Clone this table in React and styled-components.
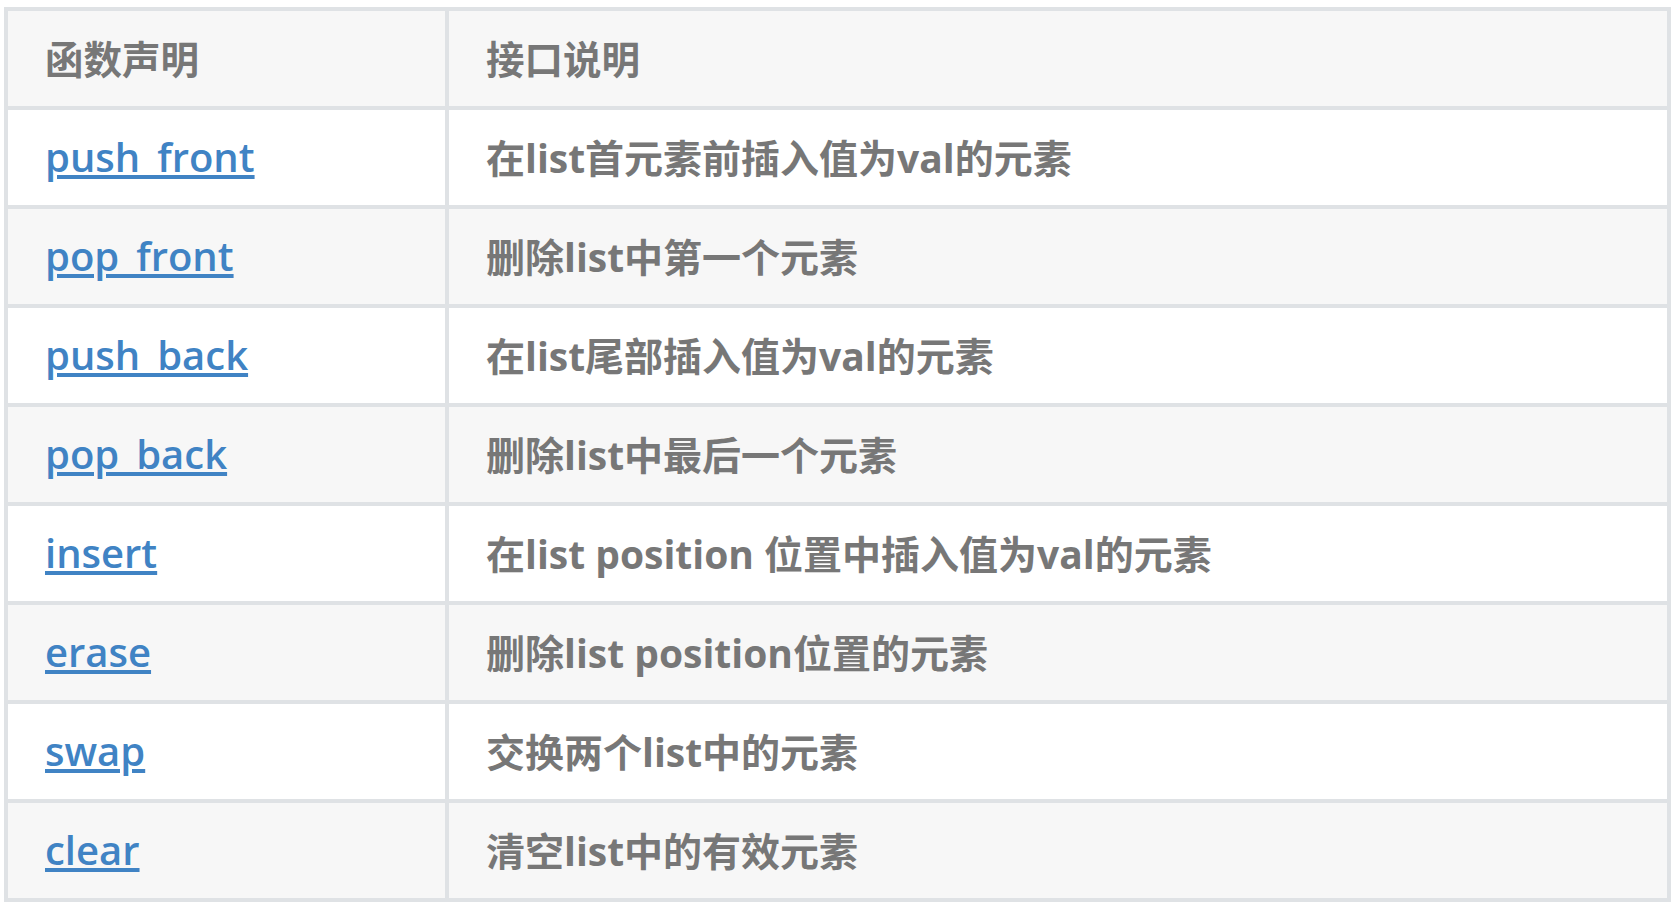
import styled, { createGlobalStyle } from "styled-components";

const GlobalStyle = createGlobalStyle`
html, body {
  margin: 0;
  padding: 0;
  background: #ffffff;
}
`;

const Page = styled.div`
padding: 7px 3px 0 4px;
font-family: "Open Sans", "Noto Sans CJK SC", sans-serif;
`;

const Table = styled.table`
width: 1667px;
border-collapse: separate;
border-spacing: 0;
border-top: 4px solid #dfe2e5;
border-left: 4px solid #dfe2e5;
table-layout: fixed;
`;

const Row = styled.tr`
background-color: ${(p) => (p.$shade ? "#f7f7f7" : "#ffffff")};
`;

const Cell = styled.td`
height: 99px;
padding: 0 0 3px 37px;
box-sizing: border-box;
border-right: 4px solid #dfe2e5;
border-bottom: 4px solid #dfe2e5;
font-size: 39px;
font-weight: 700;
color: #777777;
text-align: left;
vertical-align: middle;
white-space: nowrap;
width: ${(p) => p.$width || "auto"};
`;

const HeadCell = styled(Cell).attrs({ as: "th" })`
font-size: 38.5px;
`;

const Link = styled.a`
color: #4083c4;
font-weight: 600;
font-size: 40px;
text-decoration: underline;
text-decoration-thickness: 4px;
text-underline-offset: 3px;
text-decoration-skip-ink: auto;
`;

const rows = [
  ["push_front", "在list首元素前插入值为val的元素"],
  ["pop_front", "删除list中第一个元素"],
  ["push_back", "在list尾部插入值为val的元素"],
  ["pop_back", "删除list中最后一个元素"],
  ["insert", "在list position 位置中插入值为val的元素"],
  ["erase", "删除list position位置的元素"],
  ["swap", "交换两个list中的元素"],
  ["clear", "清空list中的有效元素"],
];

export default function App() {
  return (
    <Page>
      <GlobalStyle />
      <Table>
        <thead>
          <Row $shade>
            <HeadCell $width="441px">函数声明</HeadCell>
            <HeadCell>接口说明</HeadCell>
          </Row>
        </thead>
        <tbody>
          {rows.map(([name, desc], i) => (
            <Row key={name} $shade={i % 2 === 1}>
              <Cell>
                <Link href="#">{name}</Link>
              </Cell>
              <Cell>{desc}</Cell>
            </Row>
          ))}
        </tbody>
      </Table>
    </Page>
  );
}
